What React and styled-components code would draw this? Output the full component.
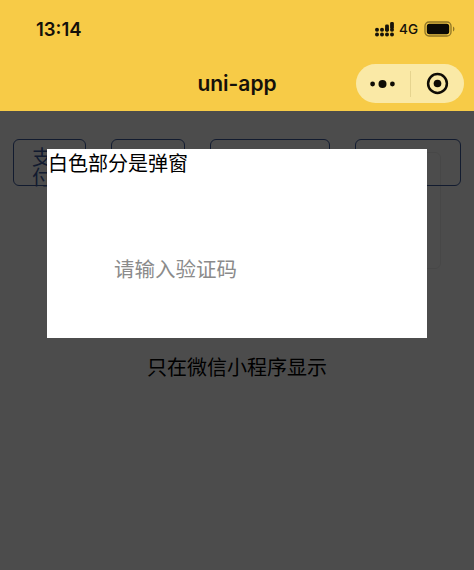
import React from "react";
import styled, { createGlobalStyle } from "styled-components";

const CJK = `"Liberation Sans", "Noto Sans CJK SC", sans-serif`;

const buttons = [
  { label: "支付", width: 73 },
  { label: "", width: 74 },
  { label: "", width: 120 },
  { label: "", width: 106 },
];

const SignalIcon = () => (
  <svg width="20" height="15" viewBox="0 0 20 15" fill="#17130a">
    {[0, 5, 10, 15].map((x, i) => (
      <g key={x}>
        <circle cx={x + 2} cy="12.5" r="2" />
        <circle cx={x + 2} cy="7.8" r="2" />
        {i > 1 && <rect x={x + 0.1} y={i === 3 ? 0 : 2.5} width="3.8" height="7" rx="1.4" />}
      </g>
    ))}
  </svg>
);

const BatteryIcon = () => (
  <svg width="31" height="16" viewBox="0 0 31 16">
    <rect x="1" y="1" width="26" height="14" rx="4" fill="none" stroke="#8f7426" strokeWidth="1.3" />
    <rect x="2.8" y="2.8" width="22.4" height="10.4" rx="2.6" fill="#0c0a05" />
    <path d="M29 5.6c1 .4 1.4 1.3 1.4 2.4s-.4 2-1.4 2.4z" fill="#8f7426" />
  </svg>
);

const MoreIcon = () => (
  <svg width="25" height="10" viewBox="0 0 25 10" fill="#0f0c05">
    <circle cx="2.6" cy="5" r="2.4" />
    <circle cx="12.5" cy="5" r="4" />
    <circle cx="22.4" cy="5" r="2.4" />
  </svg>
);

const CloseIcon = () => (
  <svg width="23" height="23" viewBox="0 0 24 24">
    <circle cx="12" cy="12" r="9.8" fill="none" stroke="#0f0c05" strokeWidth="2.6" />
    <circle cx="12" cy="12" r="4" fill="#0f0c05" />
  </svg>
);

const App = () => {
  return (
    <Page>
      <GlobalStyle />
      <Header>
        <StatusBar>
          <Clock>13:14</Clock>
          <StatusIcons>
            <SignalIcon />
            <Network>4G</Network>
            <BatteryIcon />
          </StatusIcons>
        </StatusBar>
        <NavBar>
          <Title>uni-app</Title>
          <Capsule>
            <CapsuleSlot>
              <MoreIcon />
            </CapsuleSlot>
            <CapsuleDivider />
            <CapsuleSlot>
              <CloseIcon />
            </CapsuleSlot>
          </Capsule>
        </NavBar>
      </Header>

      <Content>
        <ButtonRow>
          {buttons.map((b, i) => (
            <ActionButton key={i} $width={b.width}>
              {b.label}
            </ActionButton>
          ))}
        </ButtonRow>
        <InputCard />
        <Note>只在微信小程序显示</Note>

        <Mask>
          <Modal>
            <ModalTitle>白色部分是弹窗</ModalTitle>
            <CodeInput placeholder="请输入验证码" />
          </Modal>
        </Mask>
      </Content>
    </Page>
  );
};

const GlobalStyle = createGlobalStyle`
  html, body {
    margin: 0;
    padding: 0;
    background: #ffffff;
  }

  * {
    box-sizing: border-box;
  }
`;

const Page = styled.div`
  display: flex;
  flex-direction: column;
  width: 474px;
  height: 570px;
  overflow: hidden;
  font-family: ${CJK};
`;

const Header = styled.header`
  flex: none;
  height: 111px;
  background: #f7cb47;
  color: #14100a;
`;

const StatusBar = styled.div`
  display: flex;
  align-items: center;
  justify-content: space-between;
  height: 58px;
  padding: 0 19px 0 36px;
`;

const Clock = styled.span`
  font-family: Inter, sans-serif;
  font-size: 18.5px;
  font-weight: 600;
`;

const StatusIcons = styled.div`
  display: flex;
  align-items: center;
`;

const Network = styled.span`
  margin: 0 6px 0 4px;
  font-family: Inter, sans-serif;
  font-size: 13.5px;
  font-weight: 500;
`;

const NavBar = styled.div`
  display: flex;
  align-items: center;
  justify-content: flex-end;
  position: relative;
  height: 39px;
  margin-top: 6px;
  padding-right: 10px;
`;

const Title = styled.div`
  position: absolute;
  left: 0;
  right: 0;
  text-align: center;
  font-family: Inter, sans-serif;
  font-size: 21px;
  font-weight: 600;
`;

const Capsule = styled.div`
  display: flex;
  align-items: center;
  width: 108px;
  height: 39px;
  border-radius: 20px;
  background: #fae9a6;
`;

const CapsuleSlot = styled.div`
  flex: 1;
  display: flex;
  align-items: center;
  justify-content: center;
`;

const CapsuleDivider = styled.div`
  flex: none;
  width: 1px;
  height: 26px;
  background: #e6d48f;
`;

const Content = styled.main`
  flex: 1;
  position: relative;
  padding-top: 28px;
  background: #ffffff;
`;

const ButtonRow = styled.div`
  display: flex;
  gap: 25px;
  padding-left: 13px;
`;

const ActionButton = styled.button`
  flex: none;
  align-self: flex-start;
  width: ${(p) => p.$width}px;
  height: 47px;
  padding: 8px 32px 0 18px;
  border: 1.5px solid #3c5a9e;
  border-radius: 6px;
  background: transparent;
  color: #3c5a9e;
  font-family: ${CJK};
  font-size: 20px;
  line-height: 20px;
  text-align: left;
  word-break: break-all;
  overflow: visible;
`;

const InputCard = styled.div`
  width: 381px;
  height: 117px;
  margin: -34px 0 0 60px;
  border: 1.5px solid #eeeeee;
  border-radius: 6px;
`;

const Note = styled.p`
  margin: 86px 0 0;
  text-align: center;
  color: #000000;
  font-size: 20px;
  line-height: 26px;
`;

const Mask = styled.div`
  position: absolute;
  inset: 0;
  display: flex;
  justify-content: center;
  align-items: flex-start;
  padding-top: 38px;
  background: rgba(0, 0, 0, 0.7);
`;

const Modal = styled.div`
  width: 380px;
  height: 189px;
  padding: 2px 0 0 1px;
  background: #ffffff;
`;

const ModalTitle = styled.div`
  color: #000000;
  font-size: 20px;
  line-height: 26px;
`;

const CodeInput = styled.input`
  display: block;
  width: 300px;
  height: 40px;
  margin: 73px 0 0 66px;
  padding: 0;
  border: 0;
  outline: 0;
  background: transparent;
  font-family: ${CJK};
  font-size: 20.5px;

  &::placeholder {
    color: #8b8b8b;
    opacity: 1;
  }
`;

export default App;
